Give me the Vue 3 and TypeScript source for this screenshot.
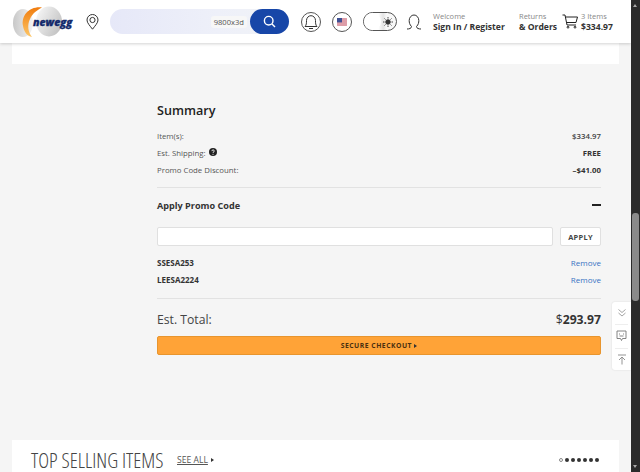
<script setup lang="ts">
const rows = [
  { label: 'Item(s):', value: '$334.97', cls: 'val', help: false },
  { label: 'Est. Shipping:', value: 'FREE', cls: 'val strong', help: true },
  { label: 'Promo Code Discount:', value: '–$41.00', cls: 'val strong', help: false },
]
const codes = ['SSESA253', 'LEESA2224']
const dots = [0, 1, 2, 3, 4, 5, 6]
</script>

<template>
  <div class="app">
    <div class="page">
      <header class="header">
        <svg class="logo" width="62" height="32" viewBox="0 0 62 32">
          <defs>
            <linearGradient id="eg" x1="0" x2="1" y1="0" y2="0">
              <stop offset="0" stop-color="#c8c8c8" />
              <stop offset="1" stop-color="#f4f4f4" />
            </linearGradient>
            <linearGradient id="eg2" x1="0" x2="1" y1="0" y2="0.6">
              <stop offset="0" stop-color="#fbfbfb" />
              <stop offset="1" stop-color="#c4c4c4" />
            </linearGradient>
            <linearGradient id="og" x1="0" x2="0" y1="0" y2="1">
              <stop offset="0" stop-color="#f07c0e" />
              <stop offset="1" stop-color="#fdc768" />
            </linearGradient>
          </defs>
          <ellipse cx="11" cy="17" rx="10" ry="14" fill="url(#eg)" />
          <ellipse cx="37" cy="15.5" rx="13" ry="15" fill="url(#eg2)" />
          <path d="M30 1.5 C18 0 9 9 11 20 C12 26 15 30 20 31 C16 26 15 19 18 13 C20 8 25 4 30 1.5Z" fill="url(#og)" />
          <text x="21" y="20" class="logo-text">newegg</text>
        </svg>
        <svg class="pin" width="13" height="16" viewBox="0 0 13 16" fill="none" stroke="#333" stroke-width="1">
          <path d="M6.5 15.2 C4 11.8 1 9 1 6 A5.5 5.5 0 0 1 12 6 C12 9 9 11.8 6.5 15.2Z" />
          <circle cx="6.5" cy="6" r="2.6" />
        </svg>
        <div class="search">
          <span class="query">9800x3d</span>
          <button class="go">
            <svg width="13" height="13" viewBox="0 0 13 13" fill="none" stroke="#fff" stroke-width="1.4">
              <circle cx="5.7" cy="5.7" r="4.3" /><path d="M9 9l3 3" />
            </svg>
          </button>
        </div>
        <div class="round bell">
          <svg width="14" height="16" viewBox="0 0 14 16" fill="none" stroke="#333" stroke-width="1">
            <path d="M1 12.5 C2.5 11 2.5 9 2.5 6.5 A4.5 4.8 0 0 1 11.5 6.5 C11.5 9 11.5 11 13 12.5Z" />
            <path d="M5 14.5h4" />
          </svg>
        </div>
        <div class="round flag">
          <svg width="10" height="8" viewBox="0 0 10 8">
            <rect width="10" height="8" rx="1" fill="#e8d8dc" />
            <path d="M0 1h10M0 3h10M0 5h10M0 7h10" stroke="#d0576a" stroke-width="0.9" />
            <rect width="5" height="4.4" fill="#3f4f93" />
          </svg>
        </div>
        <div class="toggle">
          <span class="knob"></span>
          <svg class="sun" width="10" height="10" viewBox="0 0 10 10" stroke="#333" stroke-width="0.9">
            <circle cx="5" cy="5" r="2.3" fill="#333" />
            <path d="M5 0v1.5M5 8.5V10M0 5h1.5M8.5 5H10M1.5 1.5l1 1M7.5 7.5l1 1M8.5 1.5l-1 1M2.5 7.5l-1 1" />
          </svg>
        </div>
        <svg class="user" width="16" height="16" viewBox="0 0 16 16" fill="none" stroke="#333" stroke-width="1">
          <path d="M1 15 C3 15 5.5 14.5 5.5 12.5 C3.5 10.5 3.2 8.5 3.2 6.5 A4.8 5.5 0 0 1 12.8 6.5 C12.8 8.5 12.5 10.5 10.5 12.5 C10.5 14.5 13 15 15 15" />
        </svg>
        <div class="link welcome"><small>Welcome</small><b>Sign In / Register</b></div>
        <div class="link returns"><small>Returns</small><b>&amp; Orders</b></div>
        <svg class="cart" width="16" height="15" viewBox="0 0 16 15" fill="none" stroke="#222" stroke-width="1">
          <path d="M0.5 1H3L5 11H14" /><path d="M3.5 3H15.5L14 8.5H4.5" />
          <circle cx="6" cy="13.2" r="0.9" /><circle cx="13" cy="13.2" r="0.9" />
        </svg>
        <div class="link items"><small>3 Items</small><b>$334.97</b></div>
      </header>

      <div class="strip"></div>

      <main class="summary">
        <h2 class="title">Summary</h2>
        <div v-for="r in rows" :key="r.label" class="row">
          <span class="label">
            {{ r.label }}
            <svg v-if="r.help" class="help" width="8" height="8" viewBox="0 0 8 8">
              <circle cx="4" cy="4" r="4" fill="#222" />
              <path d="M2.8 3.1 C2.8 1.6 5.3 1.6 5.3 3 C5.3 3.9 4 3.9 4 4.9" fill="none" stroke="#fff" stroke-width="0.9" />
              <circle cx="4" cy="6.2" r="0.55" fill="#fff" />
            </svg>
          </span>
          <span :class="r.cls">{{ r.value }}</span>
        </div>
        <div class="rule first"></div>
        <div class="promo-head">
          <span>Apply Promo Code</span>
          <i class="minus"></i>
        </div>
        <div class="promo-form">
          <input class="promo-input" type="text" />
          <button class="apply">APPLY</button>
        </div>
        <div class="codes">
          <div v-for="c in codes" :key="c" class="code">
            <b>{{ c }}</b><a>Remove</a>
          </div>
        </div>
        <div class="rule second"></div>
        <div class="total">
          <span>Est. Total:</span>
          <span class="amount"><em>$</em>293.97</span>
        </div>
        <button class="checkout">SECURE CHECKOUT <i class="arrow"></i></button>
      </main>

      <section class="top">
        <h3>TOP SELLING ITEMS</h3>
        <a class="see">SEE ALL</a><i class="arrow see-arrow"></i>
        <div class="dots">
          <i v-for="d in dots" :key="d" :class="d === 0 ? 'dot ring' : 'dot'"></i>
        </div>
      </section>

      <aside class="tools">
        <svg width="10" height="10" viewBox="0 0 10 10" fill="none" stroke="#9a9a9a" stroke-width="0.9">
          <path d="M1.5 1.5L5 4.5L8.5 1.5M1.5 5L5 8L8.5 5" />
        </svg>
        <span class="sep"></span>
        <svg width="11" height="12" viewBox="0 0 11 12" fill="none" stroke="#777" stroke-width="0.9">
          <path d="M1 1h9v7.5H6.5L5.5 10.5L4.5 8.5H1Z" />
          <path d="M3.5 3.5v1M7.5 3.5v1M3.5 6h4" />
        </svg>
        <span class="sep"></span>
        <svg width="10" height="11" viewBox="0 0 10 11" fill="none" stroke="#888" stroke-width="0.9">
          <path d="M1 1h8M5 10.5V3M2 6l3-3l3 3" />
        </svg>
      </aside>
    </div>

    <div class="scrollbar">
      <i class="up"></i>
      <span class="thumb"></span>
      <i class="down"></i>
    </div>
  </div>
</template>

<style>
html, body { margin: 0; overflow: hidden; }
</style>

<style scoped>
.app {
  width: 640px;
  height: 472px;
  display: flex;
  overflow: hidden;
  font-family: "Open Sans", "Liberation Sans", sans-serif;
  color: #333;
}
.page {
  width: 631px;
  height: 472px;
  background: #f5f5f5;
  position: relative;
  overflow: hidden;
  flex: none;
}
.header {
  height: 43px;
  background: #fff;
  box-shadow: 0 1px 3px rgba(0, 0, 0, 0.18);
  display: flex;
  align-items: center;
  position: relative;
  z-index: 2;
}
.logo { margin-left: 12px; flex: none; }
.logo-text {
  font: italic 800 10.5px "Open Sans", sans-serif;
  fill: #12296b;
  stroke: #12296b;
  stroke-width: 0.3;
}
.pin { margin-left: 12px; flex: none; }
.search {
  margin-left: 11px;
  width: 179px;
  height: 25px;
  border-radius: 13px;
  background: linear-gradient(90deg, #e6e8f8, #eef0f9 60%, #f1f3f6);
  display: flex;
  align-items: center;
  justify-content: flex-end;
  flex: none;
}
.query {
  font-size: 7.6px;
  color: #555;
  background: #f7f7f7;
  padding: 1px 3px;
  border-radius: 3px;
  margin-right: 3px;
}
.go {
  width: 39px;
  height: 25px;
  border: 0;
  border-radius: 13px;
  background: #1746a8;
  display: flex;
  align-items: center;
  justify-content: center;
  padding: 0;
}
.round {
  width: 18px;
  height: 18px;
  border: 1px solid #555;
  border-radius: 50%;
  display: flex;
  align-items: center;
  justify-content: center;
  flex: none;
}
.bell { margin-left: 12px; }
.flag { margin-left: 11px; }
.toggle {
  margin-left: 11px;
  width: 32px;
  height: 17px;
  border: 1px solid #555;
  border-radius: 10px;
  position: relative;
  flex: none;
  background: linear-gradient(90deg, #fff 45%, #e4e4e4 60%, #f8f8f8 70%);
}
.knob {
  position: absolute;
  left: 0;
  top: 0;
  width: 17px;
  height: 17px;
  border-radius: 50%;
  background: #fff;
}
.sun { position: absolute; right: 3px; top: 3.5px; }
.user { margin-left: 9px; flex: none; }
.link {
  display: flex;
  flex-direction: column;
  flex: none;
  white-space: nowrap;
}
.link small { font-size: 7.5px; line-height: 11px; color: #888; }
.link b { font-size: 8.6px; line-height: 11px; font-weight: 700; color: #333; }
.welcome { margin-left: 11px; width: 86px; }
.returns { width: 43px; }
.cart { flex: none; }
.items { margin-left: 3px; }
.strip {
  height: 21px;
  margin: 0 12px;
  background: #fff;
}
.summary {
  margin-left: 157px;
  width: 444px;
  height: 376px;
  display: flex;
  flex-direction: column;
}
.title {
  margin: 38px 0 0;
  font-size: 12.6px;
  line-height: 18px;
  font-weight: 600;
  color: #222;
}
.row {
  display: flex;
  justify-content: space-between;
  align-items: center;
  height: 17px;
  font-size: 7.8px;
  color: #555;
}
.row:first-of-type { margin-top: 7px; }
.help { vertical-align: -0.5px; margin-left: 1px; }
.val { color: #444; font-weight: 600; }
.strong { font-weight: 700; color: #333; }
.rule { height: 1px; background: #e2e2e2; flex: none; }
.rule.first { margin-top: 9px; }
.promo-head {
  display: flex;
  justify-content: space-between;
  align-items: center;
  height: 14px;
  margin-top: 10px;
  font-size: 9.1px;
  font-weight: 700;
  color: #333;
}
.minus { width: 9px; height: 2px; background: #222; }
.promo-form {
  display: flex;
  justify-content: space-between;
  margin-top: 15px;
}
.promo-input {
  width: 396px;
  height: 19px;
  box-sizing: border-box;
  border: 1px solid #e0e0e0;
  border-radius: 2px;
  background: #fff;
  padding: 0;
}
.apply {
  width: 41px;
  height: 19px;
  border: 1px solid #e0e0e0;
  border-radius: 2px;
  background: #fff;
  font: 700 7.4px "Open Sans", sans-serif;
  letter-spacing: 0.3px;
  color: #444;
  padding: 0;
}
.codes { margin-top: 8px; }
.code {
  display: flex;
  justify-content: space-between;
  align-items: center;
  height: 17px;
}
.code b { font-size: 8px; font-weight: 700; color: #333; }
.code a { font-size: 8px; color: #3a73c4; }
.rule.second { margin-top: 10px; }
.total {
  display: flex;
  justify-content: space-between;
  align-items: center;
  margin-top: 10px;
  height: 20px;
  font-size: 12.2px;
  color: #444;
}
.amount { font-weight: 700; color: #333; }
.amount em { font-style: normal; font-weight: 400; }
.checkout {
  margin-top: 7px;
  height: 19px;
  width: 444px;
  flex: none;
  border: 1px solid #e8952e;
  border-radius: 2px;
  background: #ffa337;
  font: 700 6.8px "Open Sans", sans-serif;
  letter-spacing: 0.5px;
  color: #4a3010;
  padding: 0;
}
.arrow {
  display: inline-block;
  border-left: 3px solid #333;
  border-top: 2.5px solid transparent;
  border-bottom: 2.5px solid transparent;
}
.top {
  margin: 0 12px;
  height: 32px;
  background: #fff;
  display: flex;
  align-items: center;
  padding: 7px 20px 0 19px;
  box-sizing: border-box;
  position: relative;
}
.top h3 {
  margin: 0;
  font-size: 20.6px;
  font-weight: 300;
  font-stretch: 75%;
  color: #444;
  white-space: nowrap;
  width: 146px;
}
.see {
  font-size: 8.6px;
  color: #555;
  text-decoration: underline;
}
.see-arrow { margin-left: 3px; }
.dots {
  margin-left: auto;
  display: flex;
  gap: 2px;
  align-items: center;
}
.dot {
  width: 4px;
  height: 4px;
  border-radius: 50%;
  background: #333;
}
.dot.ring {
  box-sizing: border-box;
  background: #fff;
  border: 1px solid #888;
}
.tools {
  position: absolute;
  left: 612px;
  top: 302px;
  width: 19px;
  height: 68px;
  background: #fff;
  border-radius: 3px 0 0 3px;
  box-shadow: 0 0 2px rgba(0, 0, 0, 0.12);
  display: flex;
  flex-direction: column;
  align-items: center;
  justify-content: space-between;
  padding: 6px 0 5px;
  box-sizing: border-box;
}
.sep { width: 13px; height: 1px; background: #eee; }
.scrollbar {
  width: 9px;
  height: 472px;
  background: #2b2b2b;
  position: relative;
  flex: none;
}
.thumb {
  position: absolute;
  left: 1px;
  top: 213px;
  width: 7px;
  height: 88px;
  border-radius: 3px;
  background: #8a8a8a;
}
.up, .down {
  position: absolute;
  left: 2px;
  border-left: 2.5px solid transparent;
  border-right: 2.5px solid transparent;
}
.up { top: 4px; border-bottom: 3px solid #a8a8a8; }
.down { bottom: 4px; border-top: 3px solid #a8a8a8; }
</style>
